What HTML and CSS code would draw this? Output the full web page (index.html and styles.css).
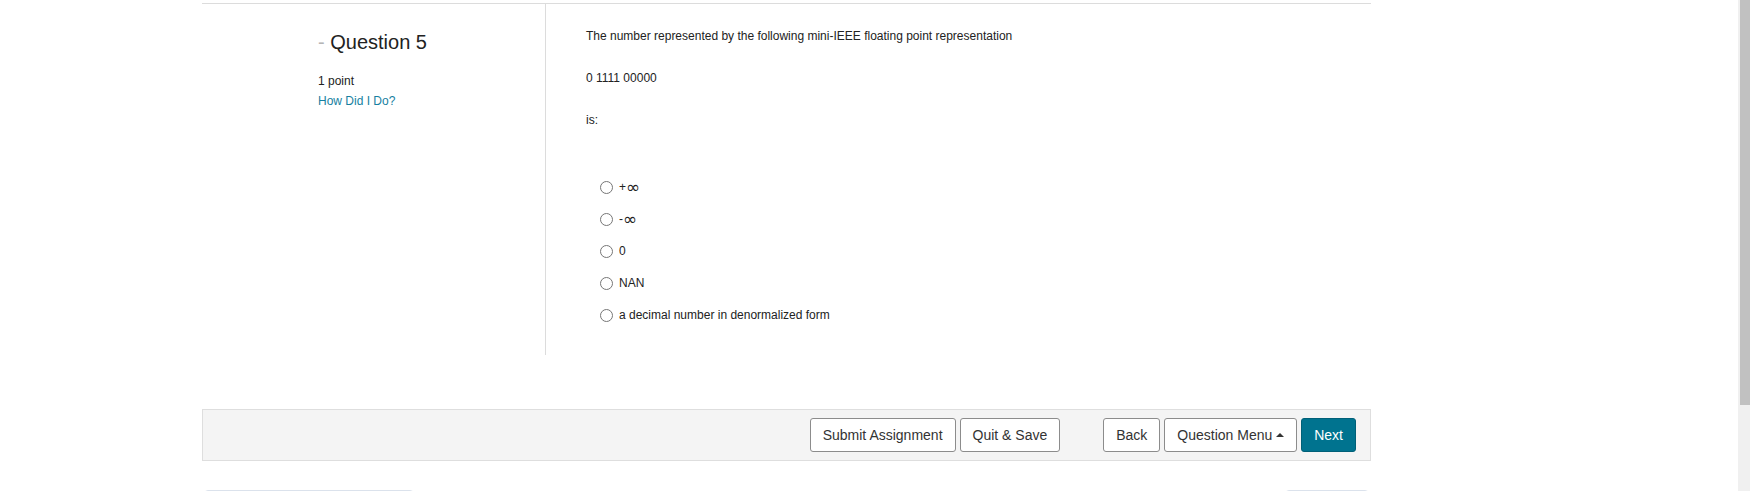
FILE: index.html
```html
<!DOCTYPE html>
<html lang="en">
<head>
    <meta charset="UTF-8">
    <meta name="viewport" content="width=device-width, initial-scale=1.0">
    <title>Question 5</title>
    <link rel="stylesheet" href="styles.css">
</head>
<body>
    <div class="page">
        <div class="container">
            <div class="question-row">
                <div class="question-info">
                    <h2 class="question-title"><span class="toggle">-</span> Question 5</h2>
                    <div class="points">1 point</div>
                    <a href="#" class="how-link">How Did I Do?</a>
                </div>
                <div class="question-body">
                    <p>The number represented by the following mini-IEEE floating point representation</p>
                    <p>0 1111 00000</p>
                    <p>is:</p>
                    <ul class="options">
                        <li><label><input type="radio" name="q5"> +<span class="inf">&infin;</span></label></li>
                        <li><label><input type="radio" name="q5"> -<span class="inf">&infin;</span></label></li>
                        <li><label><input type="radio" name="q5"> 0</label></li>
                        <li><label><input type="radio" name="q5"> NAN</label></li>
                        <li><label><input type="radio" name="q5"> a decimal number in denormalized form</label></li>
                    </ul>
                </div>
            </div>

            <div class="action-bar">
                <div class="btn-group">
                    <button type="button" class="btn">Submit Assignment</button>
                    <button type="button" class="btn">Quit &amp; Save</button>
                </div>
                <div class="btn-group">
                    <button type="button" class="btn">Back</button>
                    <button type="button" class="btn">Question Menu <span class="caret"></span></button>
                    <button type="button" class="btn btn-primary">Next</button>
                </div>
            </div>

            <div class="bottom-row">
                <div class="bottom-tab wide"></div>
                <div class="bottom-tab small">
                    <span></span><span></span>
                </div>
            </div>
        </div>
    </div>

    <!-- window scrollbar, as seen in the screenshot -->
    <div class="scrollbar" aria-hidden="true"><div class="scroll-thumb"></div></div>
</body>
</html>
```

FILE: styles.css
```css
html {
    background: #fff;
}
body {
    font-family: "Liberation Sans", Arial, sans-serif;
    font-size: 12px;
    color: #222;
    margin: 0;
    padding: 0;
}
.page {
    min-height: 595px;
    padding-top: 3px;
}
.container {
    width: 1169px;
    margin-left: 202px;
    border-top: 1px solid #dcdcdc;
}
.question-row {
    display: flex;
}
.question-info {
    width: 227px;
    padding-left: 116px;
    border-right: 1px solid #dcdcdc;
}
.question-title {
    margin: 26px 0 17px;
    font-size: 20px;
    font-weight: normal;
    line-height: 24px;
    color: #222;
}
.toggle {
    color: #b5b5b5;
}
.points {
    line-height: 20px;
}
.how-link {
    display: block;
    line-height: 20px;
    color: #1680a1;
    text-decoration: none;
}
.question-body {
    flex: 1;
    padding: 23px 0 24px 40px;
}
.question-body p {
    margin: 0 0 24px;
    line-height: 18px;
}
.options {
    list-style: none;
    margin: 42px 0 0;
    padding: 0 0 0 14px;
}
.options li {
    height: 32px;
}
.options label {
    display: flex;
    align-items: center;
    height: 32px;
}
.options input {
    width: 13px;
    height: 13px;
    margin: 0 6px 0 0;
}
.inf {
    font-family: "DejaVu Sans", sans-serif;
    font-size: 17px;
    line-height: 12px;
    letter-spacing: -1px;
}
.action-bar {
    display: flex;
    justify-content: flex-end;
    gap: 43px;
    margin-top: 54px;
    padding: 8px 14px 8px 15px;
    background: #f4f4f4;
    border: 1px solid #dedede;
}
.btn-group {
    display: flex;
    gap: 4px;
}
.btn {
    font-family: "Liberation Sans", Arial, sans-serif;
    font-size: 14px;
    line-height: 20px;
    padding: 6px 12px;
    background: #fff;
    color: #333;
    border: 1px solid #8c8c8c;
    border-radius: 3px;
    cursor: pointer;
}
.btn-primary {
    background: #00738f;
    border-color: #006078;
    color: #fff;
    padding: 6px 12px;
}
.caret {
    display: inline-block;
    width: 0;
    height: 0;
    margin-left: 0;
    vertical-align: 3px;
    border-left: 4px solid transparent;
    border-right: 4px solid transparent;
    border-bottom: 4px solid #333;
}
.bottom-row {
    display: flex;
    justify-content: space-between;
    margin-top: 29px;
}
.bottom-tab {
    height: 30px;
    border: 1px solid #dbe2ec;
    border-radius: 4px;
}
.bottom-tab.wide {
    width: 208px;
    margin-left: 2px;
}
.bottom-tab.small {
    display: flex;
    width: 82px;
    margin-right: 2px;
}
.bottom-tab.small span {
    flex: 1;
    border-left: 1px solid #e6ebf2;
}
.bottom-tab.small span:first-child {
    border-left: none;
}
.scrollbar {
    position: fixed;
    top: 0;
    right: 0;
    bottom: 0;
    width: 12px;
    background: #f0f0f0;
}
.scroll-thumb {
    height: 405px;
    margin-left: 2px;
    background: #c1c1c1;
}
```
